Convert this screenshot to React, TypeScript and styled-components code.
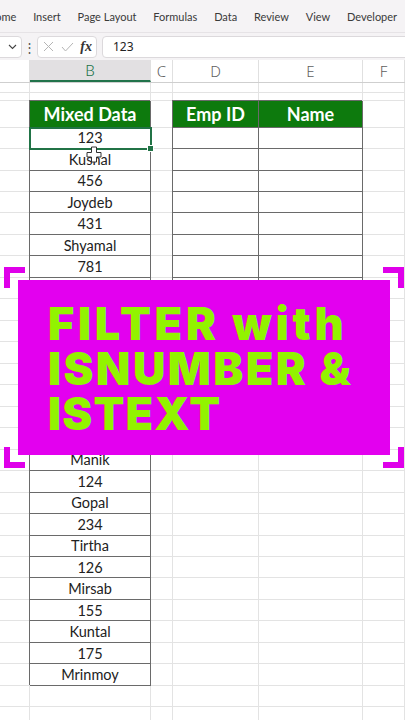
import styled, { createGlobalStyle } from "styled-components";

const GlobalStyle = createGlobalStyle`
  html, body {
    margin: 0;
    padding: 0;
    overflow: hidden;
    background: #ffffff;
  }
  body {
    font-family: "Lato", "Liberation Sans", sans-serif;
  }
`;

const COLS = "30px 121px 22px 86px 104px 42px";
const ROW_H = 21.48;

const Page = styled.div`
  position: relative;
  width: 405px;
  height: 720px;
  overflow: hidden;
  background: #ffffff;
`;

const TabBar = styled.div`
  height: 32px;
  background: #f5f3f5;
  border-bottom: 1px solid #e6e3e6;
  display: flex;
  align-items: center;
  gap: 16.8px;
  overflow: hidden;
  white-space: nowrap;
  font-family: "Lato", "Open Sans", sans-serif;
  font-size: 11px;
  color: #3a3a3a;
`;

const Tab = styled.span<{ $clipped?: boolean }>`
  flex: none;
  margin-left: ${(p) => (p.$clipped ? "-13px" : "0")};
`;

const FormulaBar = styled.div`
  height: 27px;
  background: #f5f3f5;
  display: flex;
  align-items: center;
  font-family: "Noto Sans", "Open Sans", sans-serif;
`;

const Field = styled.div`
  height: 22px;
  box-sizing: border-box;
  background: #ffffff;
  border: 1px solid #dcd9dc;
  border-radius: 4px;
  display: flex;
  align-items: center;
`;

const NameBox = styled(Field)`
  width: 23px;
  margin-left: -1px;
  border-radius: 0 4px 4px 0;
  justify-content: flex-end;
  padding-right: 4px;
`;

const Dots = styled.div`
  width: 15px;
  display: flex;
  justify-content: center;
  color: #555;
  font-size: 13px;
`;

const FxBox = styled(Field)`
  width: 60px;
  justify-content: space-between;
  padding: 0 4px 0 5px;
`;

const FxLabel = styled.span`
  font-family: "Liberation Serif", "DejaVu Serif", serif;
  font-style: italic;
  font-weight: 700;
  font-size: 14px;
  color: #333;
`;

const InputBox = styled(Field)`
  flex: 1;
  margin-left: 5px;
  margin-right: -6px;
  padding-left: 10px;
  font-size: 12px;
  color: #222;
`;

const ColHeaders = styled.div`
  display: grid;
  grid-template-columns: ${COLS};
  height: 23px;
  box-sizing: border-box;
  border-bottom: 1px solid #cfcfcf;
  background: #ffffff;
`;

const ColHead = styled.div<{ $active?: boolean }>`
  display: flex;
  align-items: center;
  justify-content: center;
  box-sizing: border-box;
  border-right: 1px solid #e0e0e0;
  background: ${(p) => (p.$active ? "#e2e0e2" : "#ffffff")};
  border-bottom: ${(p) => (p.$active ? "2px solid #21734a" : "none")};
  color: ${(p) => (p.$active ? "#21734a" : "#5e5e5e")};
  font-family: "Noto Sans", "Open Sans", sans-serif;
  font-weight: 300;
  font-size: 15px;
`;

const Row = styled.div<{ $h: number }>`
  display: grid;
  grid-template-columns: ${COLS};
  height: ${(p) => p.$h}px;
`;

type Kind = "plain" | "box" | "head";

const Cell = styled.div<{ $kind?: Kind; $selected?: boolean }>`
  box-sizing: border-box;
  display: flex;
  align-items: center;
  justify-content: center;
  white-space: nowrap;
  ${(p) =>
    p.$kind === "box" || p.$kind === "head"
      ? `
    border-right: 1px solid #6a6a6a;
    border-bottom: 1px solid #6a6a6a;
    box-shadow: -1px -1px 0 #6a6a6a;
  `
      : `
    border-right: 1px solid #e3e3e3;
    border-bottom: 1px solid #e3e3e3;
  `}
  background: ${(p) => (p.$kind === "head" ? "#0d7a0d" : "#ffffff")};
  color: ${(p) => (p.$kind === "head" ? "#ffffff" : "#222222")};
  font-weight: ${(p) => (p.$kind === "head" ? 700 : 400)};
  font-size: ${(p) => (p.$kind === "head" ? "18px" : "14.5px")};
  ${(p) =>
    p.$selected &&
    `
    position: relative;
    z-index: 2;
    outline: 2px solid #217346;
    outline-offset: -1px;
    &::after {
      content: "";
      position: absolute;
      right: -4px;
      bottom: -4px;
      width: 5px;
      height: 5px;
      background: #217346;
      border: 1px solid #ffffff;
    }
  `}
`;

const Cursor = styled.svg`
  position: absolute;
  left: 86px;
  top: 146px;
  z-index: 3;
`;

const Banner = styled.div`
  position: absolute;
  left: 18px;
  top: 280px;
  width: 372px;
  height: 175px;
  box-sizing: border-box;
  padding: 21px 0 0 30px;
  background: #e300ef;
  color: #92f300;
  font-family: "Inter", "Liberation Sans", sans-serif;
  font-weight: 900;
  font-size: 45px;
  line-height: 45px;
  white-space: nowrap;
`;

const BannerLine = styled.div<{ $spacing: number }>`
  letter-spacing: ${(p) => p.$spacing}px;
`;

type Corner = "tl" | "tr" | "bl" | "br";

const Bracket = styled.div<{ $at: Corner }>`
  position: absolute;
  width: 21px;
  height: 21px;
  box-sizing: border-box;
  border: 0 solid #df00ea;
  left: ${(p) => (p.$at === "tl" || p.$at === "bl" ? "4px" : "383px")};
  top: ${(p) => (p.$at === "tl" || p.$at === "tr" ? "267px" : "447px")};
  ${(p) => (p.$at[0] === "t" ? "border-top-width: 6px;" : "border-bottom-width: 6px;")}
  ${(p) => (p.$at[1] === "l" ? "border-left-width: 6px;" : "border-right-width: 6px;")}
`;

// rows 8..15 sit under the banner, so they are left blank here
const mixed = [
  "123", "Kusnal", "456", "Joydeb", "431", "Shyamal", "781", "",
  "", "", "", "", "", "", "", "Manik",
  "124", "Gopal", "234", "Tirtha", "126", "Mirsab", "155", "Kuntal",
  "175", "Mrinmoy",
];

const EMP_ROWS = 10;

function App() {
  const tabs = ["Insert", "Page Layout", "Formulas", "Data", "Review", "View", "Developer"];
  return (
    <Page>
      <GlobalStyle />
      <TabBar>
        <Tab $clipped>Home</Tab>
        {tabs.map((t) => (
          <Tab key={t}>{t}</Tab>
        ))}
      </TabBar>

      <FormulaBar>
        <NameBox>
          <svg width="9" height="6" viewBox="0 0 9 6">
            <path d="M1 1l3.5 3.5L8 1" fill="none" stroke="#444" strokeWidth="1.1" />
          </svg>
        </NameBox>
        <Dots>⋮</Dots>
        <FxBox>
          <svg width="11" height="11" viewBox="0 0 11 11">
            <path d="M1 1l9 9M10 1l-9 9" stroke="#b5b5b5" strokeWidth="1" />
          </svg>
          <svg width="13" height="10" viewBox="0 0 13 10">
            <path d="M1 5l3.5 4L12 1" fill="none" stroke="#b5b5b5" strokeWidth="1" />
          </svg>
          <FxLabel>fx</FxLabel>
        </FxBox>
        <InputBox>123</InputBox>
      </FormulaBar>

      <ColHeaders>
        <ColHead />
        <ColHead $active>B</ColHead>
        <ColHead>C</ColHead>
        <ColHead>D</ColHead>
        <ColHead>E</ColHead>
        <ColHead>F</ColHead>
      </ColHeaders>

      <Row $h={10}>
        {Array.from({ length: 6 }, (_, i) => (
          <Cell key={i} />
        ))}
      </Row>
      <Row $h={8.3}>
        {Array.from({ length: 6 }, (_, i) => (
          <Cell key={i} />
        ))}
      </Row>
      <Row $h={26.3}>
        <Cell />
        <Cell $kind="head">Mixed Data</Cell>
        <Cell />
        <Cell $kind="head">Emp ID</Cell>
        <Cell $kind="head">Name</Cell>
        <Cell />
      </Row>
      {mixed.map((v, i) => {
        const emp: Kind = i < EMP_ROWS ? "box" : "plain";
        return (
          <Row $h={ROW_H} key={"r" + i}>
            <Cell />
            <Cell $kind="box" $selected={i === 0}>
              {v}
            </Cell>
            <Cell />
            <Cell $kind={emp} />
            <Cell $kind={emp} />
            <Cell />
          </Row>
        );
      })}
      {[0, 1].map((r) => (
        <Row $h={ROW_H} key={"tail" + r}>
          {Array.from({ length: 6 }, (_, i) => (
            <Cell key={i} />
          ))}
        </Row>
      ))}

      <Cursor width="16" height="17" viewBox="0 0 16 17">
        <path
          d="M5.5 1h5v5.5H15v4.5h-4.5V16h-5v-5H1V6.5h4.5z"
          fill="#ffffff"
          stroke="#333"
          strokeWidth="1"
        />
      </Cursor>

      <Bracket $at="tl" />
      <Bracket $at="tr" />
      <Bracket $at="bl" />
      <Bracket $at="br" />

      <Banner>
        <BannerLine $spacing={3.7}>FILTER with</BannerLine>
        <BannerLine $spacing={2.4}>ISNUMBER &amp;</BannerLine>
        <BannerLine $spacing={1.2}>ISTEXT</BannerLine>
      </Banner>
    </Page>
  );
}

export default App;
